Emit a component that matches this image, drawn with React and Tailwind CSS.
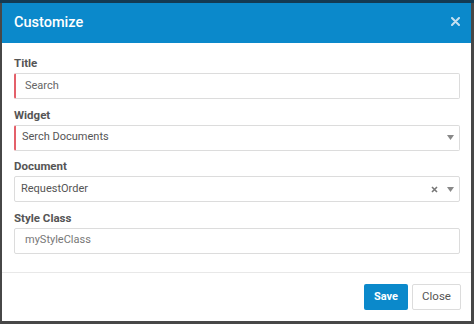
import React from 'react';

const font = { fontFamily: 'Roboto, "Liberation Sans", sans-serif' };

function Caret() {
  return (
    <svg width="7" height="5" viewBox="0 0 7 5" className="shrink-0">
      <path d="M0 0 L7 0 L3.5 5 Z" fill="#888" />
    </svg>
  );
}

function Field({ label, children }) {
  return (
    <div className="flex flex-col">
      <label className="text-[11.5px] leading-[16px] font-bold text-[#555] mb-[2px]">{label}</label>
      {children}
    </div>
  );
}

export default function App() {
  return (
    <div
      className="w-[474px] h-[324px] flex flex-col bg-[#474747] pl-[2px] pr-[3px] pb-[3px] border-t-[3px] border-t-[#143a52]"
      style={font}
    >
      <div className="flex-1 flex flex-col bg-white">
        {/* header */}
        <div className="h-[40px] bg-[#0b89cb] flex items-center justify-between pl-[12px] pr-[11px]">
          <span className="text-white text-[14.5px] font-medium">Customize</span>
          <svg width="9" height="9" viewBox="0 0 9 9" className="-mt-[3px]">
            <path d="M1 1 L8 8 M8 1 L1 8" stroke="#c6e0f0" strokeWidth="2" strokeLinecap="round" />
          </svg>
        </div>

        {/* body */}
        <div className="flex flex-col gap-[7.5px] pl-[12px] pr-[11px] pt-[12px] pb-[18px] border-b border-[#e8e8e8]">
          <Field label="Title">
            <div className="h-[26px] flex items-center border border-[#dcdcdc] border-l-2 border-l-[#e4606a] rounded-[2px] pl-[9px] text-[11px] text-[#666]">
              Search
            </div>
          </Field>
          <Field label="Widget">
            <div className="h-[26px] flex items-center justify-between border border-[#dcdcdc] border-l-2 border-l-[#e4606a] rounded-[2px] pl-[6px] pr-[5px] text-[11px] text-[#555]">
              <span>Serch Documents</span>
              <Caret />
            </div>
          </Field>
          <Field label="Document">
            <div className="h-[26px] flex items-center border border-[#dcdcdc] rounded-[2px] pl-[6px] pr-[5px] text-[11px] text-[#555]">
              <span className="flex-1">RequestOrder</span>
              <svg width="7" height="7" viewBox="0 0 7 7" className="mr-[9px]">
                <path d="M1 1 L6 6 M6 1 L1 6" stroke="#777" strokeWidth="1.6" />
              </svg>
              <Caret />
            </div>
          </Field>
          <Field label="Style Class">
            <div className="h-[26px] flex items-center border border-[#dcdcdc] rounded-[2px] pl-[10px] text-[11px] text-[#777]">
              myStyleClass
            </div>
          </Field>
        </div>

        {/* footer */}
        <div className="flex-1 flex items-center justify-end gap-[4px] pr-[10px]">
          <button className="h-[26px] w-[44px] bg-[#0b89cb] text-white text-[11px] font-bold rounded-[2px]">
            Save
          </button>
          <button className="h-[26px] w-[49px] bg-white border border-[#dcdcdc] text-[#555] text-[11.5px] rounded-[2px]">
            Close
          </button>
        </div>
      </div>
    </div>
  );
}
